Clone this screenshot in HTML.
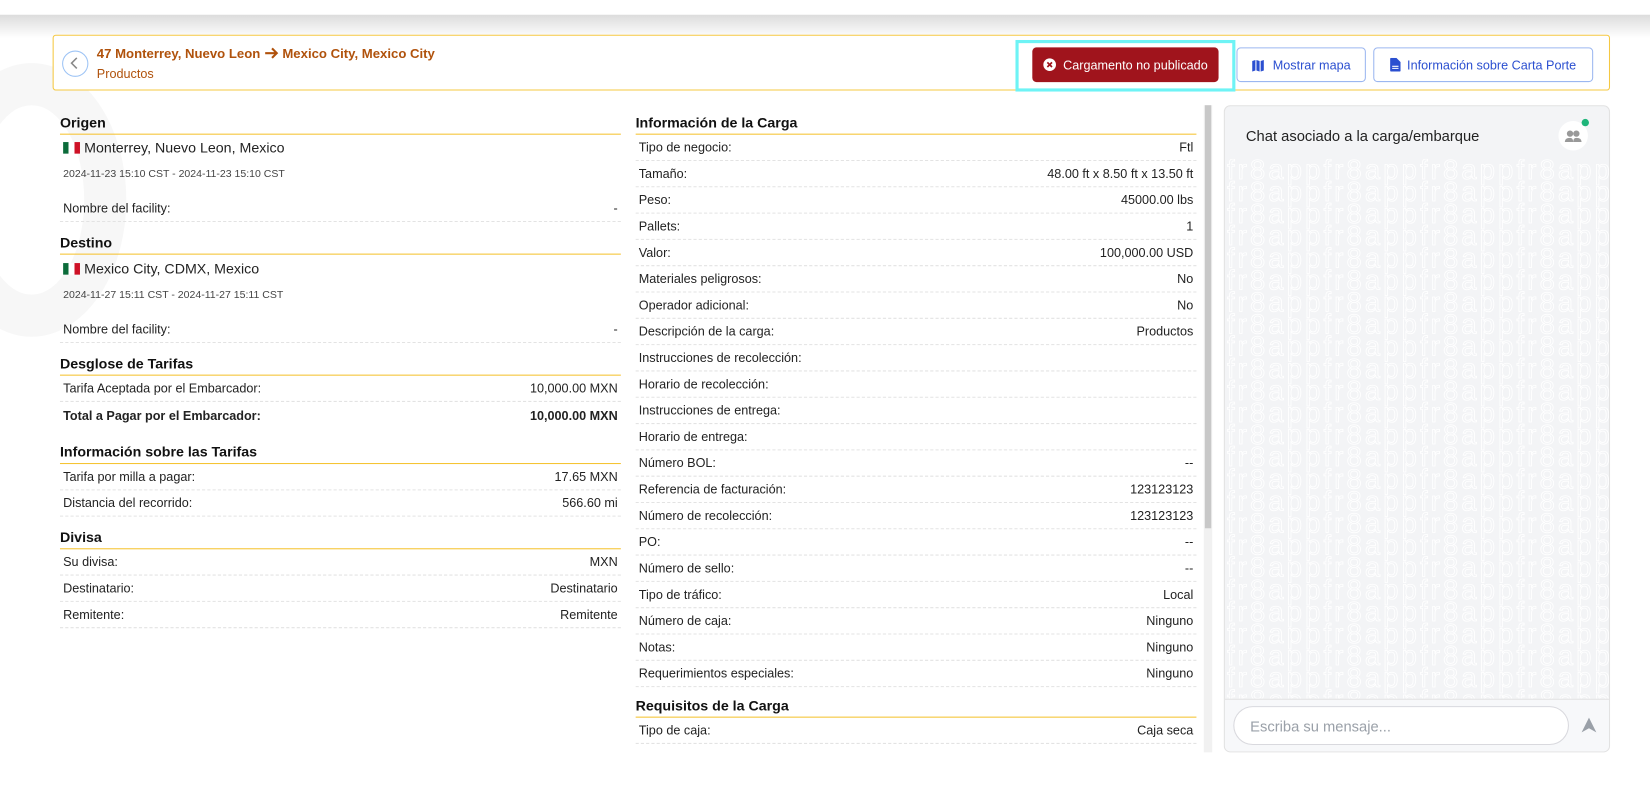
<!DOCTYPE html>
<html><head><meta charset="utf-8">
<style>
*{box-sizing:border-box;margin:0;padding:0}
html,body{width:1650px;height:797px;overflow:hidden;background:#fff}
body{font-family:"Liberation Sans",Arial,sans-serif;color:#222}
#w{position:absolute;left:0;top:0;width:1568px;height:758px;transform:scale(1.05230);transform-origin:0 0}
.topbar{position:absolute;left:0;top:14px;width:1568px;height:22px;background:linear-gradient(#dcdcdc,#fff)}
.banner{position:absolute;left:50px;top:33px;width:1480px;height:53px;border:1px solid #f5c842;border-radius:3px;background:#fff}
.back{position:absolute;left:8px;top:14px;width:25px;height:25px;border:1.5px solid #9cc3f5;border-radius:50%}
.title{position:absolute;left:41px;top:10px;font-size:12.5px;font-weight:bold;color:#b0520c}
.sub{position:absolute;left:41px;top:29px;font-size:12px;color:#b0520c}
.hl{position:absolute;left:965px;top:38px;width:209px;height:49px;border:3px solid #6ef3f5}
.btn{position:absolute;top:45px;height:33px;border-radius:4px;font-size:12px;display:flex;align-items:center;justify-content:center;gap:6px}
.red{left:981px;width:177px;background:#a0141c;color:#fff}
.blue{border:1px solid #9cb7f0;color:#2b4fd0;background:#fff}
.col{position:absolute;top:107px;font-size:12px}
.h{display:flex;align-items:flex-end;font-weight:bold;font-size:13.5px;padding-bottom:3px;border-bottom:1.5px solid #f5c331;color:#111}
.r{height:25px;display:flex;justify-content:space-between;align-items:center;padding:0 3px;border-bottom:1px dashed #e3e3e3}
.nb{border-bottom:none}
.flag{display:inline-block;width:16px;height:11px;background:linear-gradient(90deg,#0b6b3a 33%,#fff 33%,#fff 66%,#ce1126 66%);margin-right:4px;vertical-align:-1px}
.place{font-size:13.5px;height:25px;display:flex;align-items:center;padding-left:3px}
.date{font-size:10px;color:#444;height:24px;display:flex;align-items:center;padding-left:3px}
.chat{position:absolute;left:1163px;top:100px;width:367px;height:615px;background:#f3f4f6;border:1px solid #e2e2e2;border-radius:6px;overflow:hidden}
.pat{position:absolute;left:2px;top:50px;width:370px;height:513px;overflow:hidden;color:transparent;-webkit-text-stroke:0.8px #fff;font-size:26px;line-height:21px;letter-spacing:3px;white-space:nowrap}
.inp{position:absolute;left:0;top:563px;width:367px;height:52px;background:#f7f8fa;border-top:1px solid #e2e2e2}
</style></head><body><div id="w">
<div style="position:absolute;left:-60px;top:60px;width:180px;height:260px;border-radius:50%;border:40px solid #f7f7f7"></div>
<div class="topbar"></div>
<div class="banner">
<div class="back"><svg width="22" height="22" viewBox="0 0 22 22" style="position:absolute;left:0;top:0"><path d="M13 6 L8 11 L13 16" stroke="#888" stroke-width="1.5" fill="none"/></svg></div>
<div class="title">47 Monterrey, Nuevo Leon <svg width="14" height="11" style="vertical-align:-1px"><path d="M1 5.5H12M7.5 1L12 5.5L7.5 10" stroke="#b0520c" stroke-width="2" fill="none"/></svg> Mexico City, Mexico City</div>
<div class="sub">Productos</div>
</div>
<div class="hl"></div>
<div class="btn red"><svg width="13" height="13"><circle cx="6.5" cy="6.5" r="6" fill="#fff"/><path d="M4.3 4.3L8.7 8.7M8.7 4.3L4.3 8.7" stroke="#a0141c" stroke-width="1.6"/></svg>Cargamento no publicado</div>
<div class="btn blue" style="left:1175px;width:123px"><svg width="14" height="12"><path d="M1 2L4 1V11L1 12ZM5 1L8 2V12L5 11ZM9 2L12 1V11L9 12Z" fill="#2b4fd0"/></svg>Mostrar mapa</div>
<div class="btn blue" style="left:1305px;width:209px"><svg width="10" height="13"><path d="M0 1Q0 0 1 0H6L10 4V12Q10 13 9 13H1Q0 13 0 12Z" fill="#2b4fd0"/><path d="M2 8H8M2 10H8" stroke="#fff"/></svg>Información sobre Carta Porte</div>

<div class="col" style="left:57px;width:533px">
<div class="h" style="height:21px">Origen</div>
<div class="place"><span class="flag"></span>Monterrey, Nuevo Leon, Mexico</div>
<div class="date">2024-11-23 15:10 CST - 2024-11-23 15:10 CST</div>
<div style="height:9px"></div>
<div class="r"><span>Nombre del facility:</span><span>-</span></div>
<div class="h" style="height:31px">Destino</div>
<div class="place" style="height:26px"><span class="flag"></span>Mexico City, CDMX, Mexico</div>
<div class="date">2024-11-27 15:11 CST - 2024-11-27 15:11 CST</div>
<div style="height:9px"></div>
<div class="r"><span>Nombre del facility:</span><span>-</span></div>
<div class="h" style="height:31px">Desglose de Tarifas</div>
<div class="r"><span>Tarifa Aceptada por el Embarcador:</span><span>10,000.00 MXN</span></div>
<div class="r nb" style="font-weight:bold"><span>Total a Pagar por el Embarcador:</span><span>10,000.00 MXN</span></div>
<div class="h" style="height:34px">Información sobre las Tarifas</div>
<div class="r"><span>Tarifa por milla a pagar:</span><span>17.65 MXN</span></div>
<div class="r"><span>Distancia del recorrido:</span><span>566.60 mi</span></div>
<div class="h" style="height:31px">Divisa</div>
<div class="r"><span>Su divisa:</span><span>MXN</span></div>
<div class="r"><span>Destinatario:</span><span>Destinatario</span></div>
<div class="r"><span>Remitente:</span><span>Remitente</span></div>
</div>

<div class="col" style="left:604px;width:533px;height:607px;overflow:hidden">
<div class="h" style="height:21px">Información de la Carga</div>
<div class="r"><span>Tipo de negocio:</span><span>Ftl</span></div>
<div class="r"><span>Tamaño:</span><span>48.00 ft x 8.50 ft x 13.50 ft</span></div>
<div class="r"><span>Peso:</span><span>45000.00 lbs</span></div>
<div class="r"><span>Pallets:</span><span>1</span></div>
<div class="r"><span>Valor:</span><span>100,000.00 USD</span></div>
<div class="r"><span>Materiales peligrosos:</span><span>No</span></div>
<div class="r"><span>Operador adicional:</span><span>No</span></div>
<div class="r"><span>Descripción de la carga:</span><span>Productos</span></div>
<div class="r"><span>Instrucciones de recolección:</span><span></span></div>
<div class="r"><span>Horario de recolección:</span><span></span></div>
<div class="r"><span>Instrucciones de entrega:</span><span></span></div>
<div class="r"><span>Horario de entrega:</span><span></span></div>
<div class="r"><span>Número BOL:</span><span>--</span></div>
<div class="r"><span>Referencia de facturación:</span><span>123123123</span></div>
<div class="r"><span>Número de recolección:</span><span>123123123</span></div>
<div class="r"><span>PO:</span><span>--</span></div>
<div class="r"><span>Número de sello:</span><span>--</span></div>
<div class="r"><span>Tipo de tráfico:</span><span>Local</span></div>
<div class="r"><span>Número de caja:</span><span>Ninguno</span></div>
<div class="r"><span>Notas:</span><span>Ninguno</span></div>
<div class="r"><span>Requerimientos especiales:</span><span>Ninguno</span></div>
<div class="h" style="height:29px">Requisitos de la Carga</div>
<div class="r"><span>Tipo de caja:</span><span>Caja seca</span></div>
<div class="r"><span>Categoría de caja:</span><span>48 ft</span></div>
</div>
<div style="position:absolute;left:1144px;top:100px;width:8px;height:615px;background:#f1f1f1"></div>
<div style="position:absolute;left:1145px;top:100px;width:6px;height:402px;background:#c8c8c8"></div>

<div class="chat">
<div style="position:absolute;left:20px;top:20px;font-size:14px;color:#222">Chat asociado a la carga/embarque</div>
<div style="position:absolute;left:317px;top:14px;width:28px;height:28px;border-radius:50%;background:#fff"><svg width="28" height="28"><circle cx="11" cy="12" r="3" fill="#999"/><circle cx="17" cy="12" r="3" fill="#999"/><path d="M6 20Q6 16 11 16Q14 16 14 20ZM14 20Q14 16 17 16Q22 16 22 20Z" fill="#999"/></svg><div style="position:absolute;right:-1px;top:-2px;width:7px;height:7px;border-radius:50%;background:#1fb57a"></div></div>
<div class="pat">fr8appfr8appfr8appfr8appfr8app<br>fr8appfr8appfr8appfr8appfr8app<br>fr8appfr8appfr8appfr8appfr8app<br>fr8appfr8appfr8appfr8appfr8app<br>fr8appfr8appfr8appfr8appfr8app<br>fr8appfr8appfr8appfr8appfr8app<br>fr8appfr8appfr8appfr8appfr8app<br>fr8appfr8appfr8appfr8appfr8app<br>fr8appfr8appfr8appfr8appfr8app<br>fr8appfr8appfr8appfr8appfr8app<br>fr8appfr8appfr8appfr8appfr8app<br>fr8appfr8appfr8appfr8appfr8app<br>fr8appfr8appfr8appfr8appfr8app<br>fr8appfr8appfr8appfr8appfr8app<br>fr8appfr8appfr8appfr8appfr8app<br>fr8appfr8appfr8appfr8appfr8app<br>fr8appfr8appfr8appfr8appfr8app<br>fr8appfr8appfr8appfr8appfr8app<br>fr8appfr8appfr8appfr8appfr8app<br>fr8appfr8appfr8appfr8appfr8app<br>fr8appfr8appfr8appfr8appfr8app<br>fr8appfr8appfr8appfr8appfr8app<br>fr8appfr8appfr8appfr8appfr8app<br>fr8appfr8appfr8appfr8appfr8app<br>fr8appfr8appfr8appfr8appfr8app</div>
<div class="inp">
<div style="position:absolute;left:8px;top:6px;width:319px;height:37px;border:1px solid #d9d9de;border-radius:19px;background:#fff;font-size:14px;color:#9aa0a8;padding:10px 0 0 15px">Escriba su mensaje...</div>
<svg style="position:absolute;left:337px;top:15px" width="18" height="18"><path d="M9 2L16 16L9 12L2 16Z" fill="#9aa0a8"/></svg>
</div>
</div>
</div></body></html>
